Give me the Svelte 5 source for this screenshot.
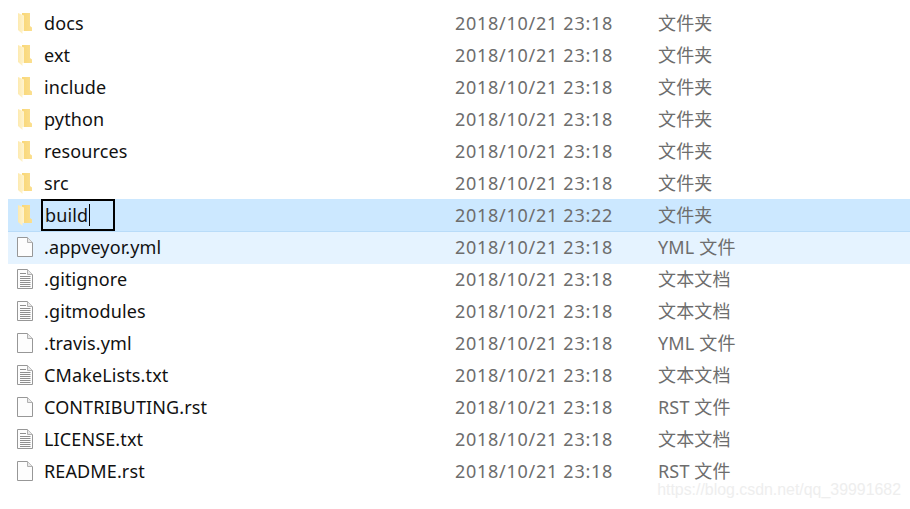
<script>
  const files = [
    ['docs', '2018/10/21 23:18', '文件夹', 'folder', ''],
    ['ext', '2018/10/21 23:18', '文件夹', 'folder', ''],
    ['include', '2018/10/21 23:18', '文件夹', 'folder', ''],
    ['python', '2018/10/21 23:18', '文件夹', 'folder', ''],
    ['resources', '2018/10/21 23:18', '文件夹', 'folder', ''],
    ['src', '2018/10/21 23:18', '文件夹', 'folder', ''],
    ['build', '2018/10/21 23:22', '文件夹', 'folder', 'selected'],
    ['.appveyor.yml', '2018/10/21 23:18', 'YML 文件', 'blank', 'hover'],
    ['.gitignore', '2018/10/21 23:18', '文本文档', 'text', ''],
    ['.gitmodules', '2018/10/21 23:18', '文本文档', 'text', ''],
    ['.travis.yml', '2018/10/21 23:18', 'YML 文件', 'blank', ''],
    ['CMakeLists.txt', '2018/10/21 23:18', '文本文档', 'text', ''],
    ['CONTRIBUTING.rst', '2018/10/21 23:18', 'RST 文件', 'blank', ''],
    ['LICENSE.txt', '2018/10/21 23:18', '文本文档', 'text', ''],
    ['README.rst', '2018/10/21 23:18', 'RST 文件', 'blank', '']
  ];
</script>

<main class="list">
  <svg width="0" height="0" class="defs" aria-hidden="true">
    <defs>
      <linearGradient id="fb" x1="0" y1="0" x2="1" y2="0">
        <stop offset="0" stop-color="#f9d777" />
        <stop offset="1" stop-color="#fbdf90" />
      </linearGradient>
      <linearGradient id="ff" x1="0" y1="0" x2="1" y2="0">
        <stop offset="0" stop-color="#fdeab0" />
        <stop offset="1" stop-color="#fff4d0" />
      </linearGradient>
    </defs>
  </svg>
  {#each files as [name, date, type, icon, state]}
    <div class="row {state}">
      <span class="icon">
        {#if icon === 'folder'}
          <svg width="18" height="22" viewBox="0 0 18 22">
            <path d="M6 1H14V14L16 15.5V19H6Z" fill="url(#fb)" />
            <path d="M2 1L8 3.5V19H6.5V22L2 18Z" fill="url(#ff)" />
          </svg>
        {:else}
          <svg width="18" height="22" viewBox="0 0 18 22">
            <path d="M1.5 1.5H11.5L16.5 6.5V20.5H1.5Z" fill="#fdfdfd" stroke="#979797" />
            <path d="M11.5 1.5V6.5H16.5" fill="#e8e8e8" stroke="#b0b0b0" />
            {#if icon === 'text'}
              <path d="M4 5.5H10M4 8.5H14.5M4 10.5H14.5M4 12.5H14.5M4 14.5H14.5M4 16.5H14.5M4 18.5H14.5" stroke="#8f8f8f" fill="none" />
            {/if}
          </svg>
        {/if}
      </span>
      {#if state === 'selected'}
        <span class="name"><span class="edit">{name}<i class="caret"></i></span></span>
      {:else}
        <span class="name">{name}</span>
      {/if}
      <span class="date">{date}</span>
      <span class="type">{type}</span>
    </div>
  {/each}
  <div class="mark">https://blog.csdn.net/qq_39991682</div>
</main>

<style>
  :global(body) {
    margin: 0;
    background: #fff;
  }
  .defs {
    position: absolute;
  }
  .list {
    height: 509px;
    box-sizing: border-box;
    padding: 7px 0 0 8px;
    overflow: hidden;
    position: relative;
    font-family: "Noto Sans", "Noto Sans CJK SC", sans-serif;
    font-size: 18px;
  }
  .row {
    display: grid;
    grid-template-columns: 36px 411px 203px 1fr;
    align-items: center;
    height: 32px;
    box-sizing: border-box;
  }
  .row.selected {
    background: #cce8ff;
    box-shadow: 0 1px 0 #b9dcf9;
    position: relative;
    z-index: 1;
  }
  .row.hover {
    background: #e5f3ff;
    box-shadow: 0 1px 0 #e5f3ff;
  }
  .icon {
    display: flex;
    padding-left: 8px;
  }
  .name {
    color: #111;
    white-space: nowrap;
    letter-spacing: 0.12px;
  }
  .edit {
    display: inline-flex;
    align-items: center;
    box-sizing: border-box;
    width: 74px;
    height: 32px;
    margin-left: -3px;
    padding-left: 2px;
    border: 2px solid #000;
    line-height: 1;
  }
  .caret {
    display: inline-block;
    width: 1px;
    height: 22px;
    background: #000;
    margin-left: 1px;
  }
  .date,
  .type {
    color: #6d6d6d;
    white-space: nowrap;
  }
  .date {
    letter-spacing: 0.72px;
  }
  .type {
    padding-bottom: 2px;
    letter-spacing: 0.15px;
  }
  .mark {
    position: absolute;
    right: 9px;
    bottom: 11px;
    font-family: "Liberation Sans", sans-serif;
    font-size: 15.9px;
    line-height: 1;
    color: #eeeeee;
  }
</style>
